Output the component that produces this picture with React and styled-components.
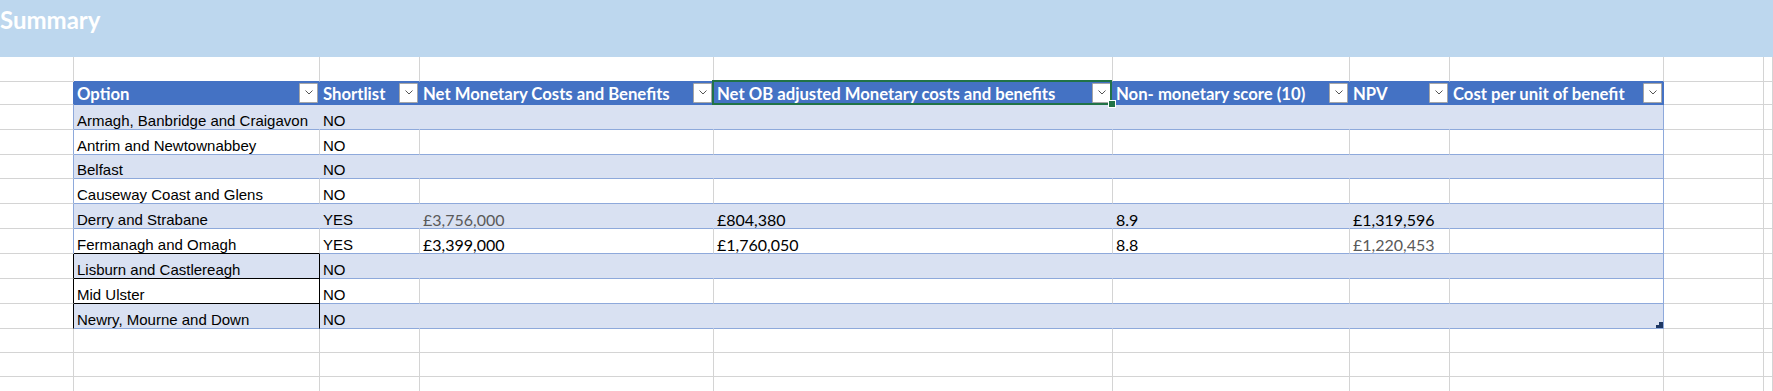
import React from "react";
import styled, { createGlobalStyle } from "styled-components";

const GlobalStyle = createGlobalStyle`
  html, body {
    margin: 0;
    padding: 0;
    background: #ffffff;
    overflow: hidden;
  }
`;

const GRID = "#d4d4d4";
const HEAD = "#4472c4";
const LINE = "#8ea9db";
const BAND = "#d9e1f2";
const BLACK = "#000000";

const Sheet = styled.div`
  width: 1773px;
  height: 391px;
  overflow: hidden;
  display: flex;
  flex-direction: column;
`;

const Banner = styled.div`
  height: 57px;
  flex: none;
  background: #bdd7ee;
  color: #ffffff;
  font-family: Lato, "Open Sans", sans-serif;
  font-weight: 700;
  font-size: 24px;
  line-height: 26px;
  padding-top: 7px;
  box-sizing: border-box;
`;

const Row = styled.div`
  display: grid;
  grid-template-columns: 74px 246px 100px 294px 399px 237px 100px 214px 100px 1fr;
  height: ${(p) => p.$h}px;
  flex: none;
  position: relative;
  z-index: ${(p) => p.$z || 0};
`;

const Cell = styled.div`
  box-sizing: border-box;
  position: relative;
  display: flex;
  align-items: flex-end;
  min-width: 0;
  padding: 0 3px 0 3px;
  background: ${(p) => p.$bg || "#ffffff"};
  border-right: 1px solid ${(p) => p.$r || GRID};
  border-bottom: 1px solid ${(p) => p.$b || GRID};
  white-space: nowrap;
  overflow: hidden;
  font-family: ${(p) =>
    p.$num ? 'Lato, "Open Sans", sans-serif' : '"Liberation Sans", Arial, sans-serif'};
  font-size: ${(p) => (p.$num ? "16px" : "15px")};
  line-height: 16px;
  color: ${(p) => (p.$muted ? "#595959" : "#000000")};
`;

const HeadCell = styled.div`
  box-sizing: border-box;
  position: relative;
  display: flex;
  align-items: flex-end;
  justify-content: space-between;
  padding: 0 1px 0 3px;
  background: ${HEAD};
  border-right: 1px solid ${HEAD};
  border-bottom: 1px solid ${HEAD};
  color: #ffffff;
  font-family: Lato, "Open Sans", sans-serif;
  font-weight: 700;
  font-size: 16.7px;
  line-height: 19px;
  white-space: nowrap;

  ${(p) =>
    p.$selected &&
    `
    &::after {
      content: "";
      position: absolute;
      top: -2px;
      left: -2px;
      right: 0;
      bottom: -1px;
      border: 2px solid #217346;
      pointer-events: none;
    }
  `}
`;

const SelHandle = styled.span`
  position: absolute;
  right: -4px;
  bottom: -4px;
  width: 6px;
  height: 6px;
  background: #217346;
  border: 1px solid #ffffff;
  z-index: 3;
`;

const FilterButton = styled.span`
  align-self: center;
  flex: none;
  width: 19px;
  height: 20px;
  box-sizing: border-box;
  background: #ffffff;
  border: 1px solid #a6a6a6;
  border-radius: 1px;
  display: flex;
  align-items: center;
  justify-content: center;
  margin-bottom: 1px;
`;

const ResizeMark = styled.svg`
  position: absolute;
  right: -1px;
  bottom: -1px;
`;

const columns = [
  "Option",
  "Shortlist",
  "Net Monetary Costs and Benefits",
  "Net OB adjusted Monetary costs and benefits",
  "Non- monetary score (10)",
  "NPV",
  "Cost per unit of benefit",
];

const data = [
  { name: "Armagh, Banbridge and Craigavon", list: "NO" },
  { name: "Antrim and Newtownabbey", list: "NO" },
  { name: "Belfast", list: "NO" },
  { name: "Causeway Coast and Glens", list: "NO" },
  {
    name: "Derry and Strabane",
    list: "YES",
    vals: [
      { t: "£3,756,000", muted: true },
      { t: "£804,380" },
      { t: "8.9" },
      { t: "£1,319,596" },
    ],
  },
  {
    name: "Fermanagh and Omagh",
    list: "YES",
    vals: [
      { t: "£3,399,000" },
      { t: "£1,760,050" },
      { t: "8.8" },
      { t: "£1,220,453", muted: true },
    ],
    outlineBelow: true,
  },
  { name: "Lisburn and Castlereagh", list: "NO", outlined: true, outlineBelow: true },
  { name: "Mid Ulster", list: "NO", outlined: true, outlineBelow: true },
  { name: "Newry, Mourne and Down", list: "NO", outlined: true },
];

const heights = [25, 25, 24, 25, 25, 25, 25, 25, 25];

const Chevron = () => (
  <svg width="8" height="5" viewBox="0 0 8 5">
    <polyline points="0.5,0.5 4,4 7.5,0.5" fill="none" stroke="#555" strokeWidth="1" />
  </svg>
);

const PlainRow = ({ h, bottomTable }) => (
  <Row $h={h}>
    <Cell />
    {columns.map((c) => (
      <Cell key={c} $b={bottomTable ? HEAD : GRID} />
    ))}
    <Cell />
    <Cell />
  </Row>
);

const DataRow = ({ row, index }) => {
  const band = index % 2 === 0;
  const bg = band ? BAND : "#ffffff";
  const inner = band ? BAND : GRID;
  const vals = row.vals || [];
  const last = index === data.length - 1;
  return (
    <Row $h={heights[index]}>
      <Cell $r={row.outlined ? BLACK : LINE} />
      <Cell $bg={bg} $r={row.outlined ? BLACK : inner} $b={row.outlineBelow ? BLACK : LINE}>
        {row.name}
      </Cell>
      <Cell $bg={bg} $r={inner} $b={LINE}>
        {row.list}
      </Cell>
      {[0, 1, 2, 3].map((i) => (
        <Cell key={i} $num $muted={vals[i] && vals[i].muted} $bg={bg} $r={inner} $b={LINE}>
          {vals[i] ? vals[i].t : ""}
        </Cell>
      ))}
      <Cell $bg={bg} $r={LINE} $b={LINE}>
        {last && (
          <ResizeMark width="8" height="7" viewBox="0 0 8 7">
            <polygon points="3,0 8,0 8,7 0,7 0,3 3,3" fill="#1f3864" />
          </ResizeMark>
        )}
      </Cell>
      <Cell />
      <Cell />
    </Row>
  );
};

export default function App() {
  return (
    <Sheet>
      <GlobalStyle />
      <Banner>Summary</Banner>
      <PlainRow h={25} bottomTable />
      <Row $h={23} $z={2}>
        <Cell $r={HEAD} />
        {columns.map((c, i) => (
          <HeadCell key={c} $selected={i === 3}>
            <span>{c}</span>
            <FilterButton>
              <Chevron />
            </FilterButton>
            {i === 3 && <SelHandle />}
          </HeadCell>
        ))}
        <Cell />
        <Cell />
      </Row>
      {data.map((row, i) => (
        <DataRow key={row.name} row={row} index={i} />
      ))}
      <PlainRow h={24} />
      <PlainRow h={24} />
      <PlainRow h={24} />
    </Sheet>
  );
}
